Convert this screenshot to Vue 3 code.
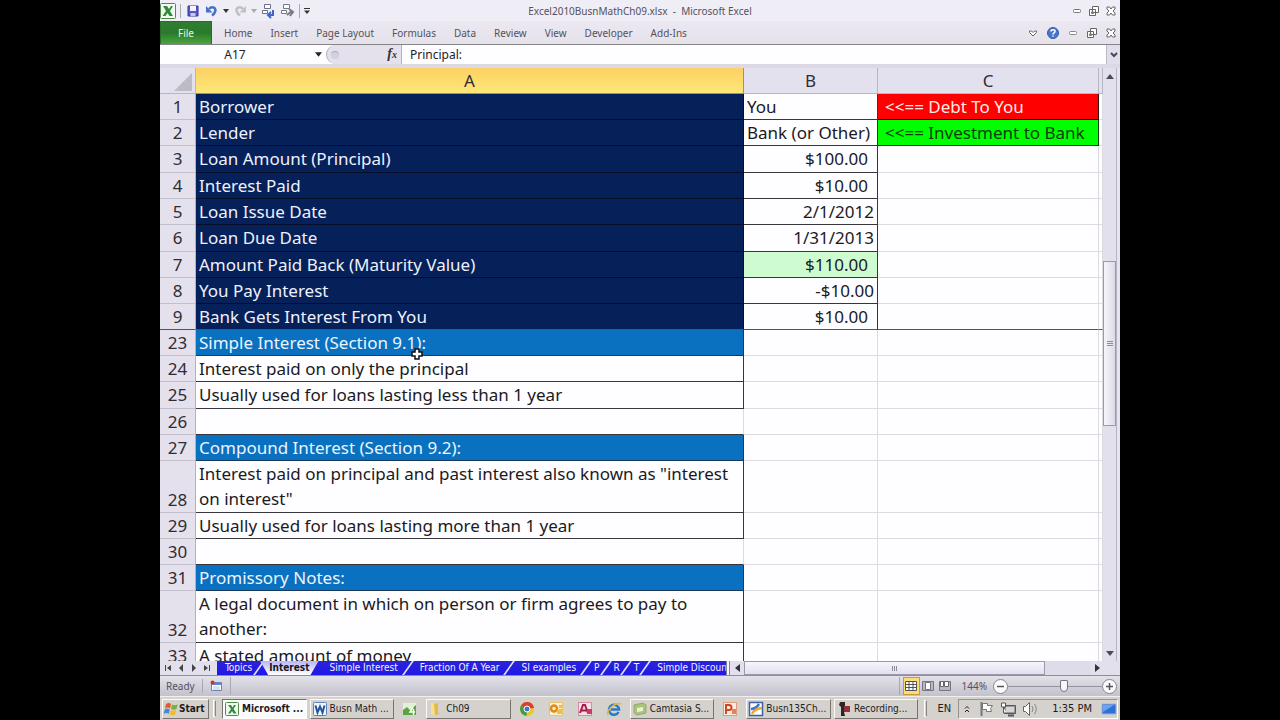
<script setup>
import { ref } from 'vue'

const ribbonTabs = ['Home', 'Insert', 'Page Layout', 'Formulas', 'Data', 'Review', 'View', 'Developer', 'Add-Ins']

const rows = [
  { n: 1, a: 'Borrower', kind: 'navy', b: 'You', c: '<<== Debt To You', cKind: 'red' },
  { n: 2, a: 'Lender', kind: 'navy', b: 'Bank (or Other)', c: '<<== Investment to Bank', cKind: 'green' },
  { n: 3, a: 'Loan Amount (Principal)', kind: 'navy', b: '$100.00', bKind: 'money', tall: true },
  { n: 4, a: 'Interest Paid', kind: 'navy', b: '$10.00', bKind: 'money' },
  { n: 5, a: 'Loan Issue Date', kind: 'navy', b: '2/1/2012', bKind: 'right' },
  { n: 6, a: 'Loan Due Date', kind: 'navy', b: '1/31/2013', bKind: 'right', tall: true },
  { n: 7, a: 'Amount Paid Back (Maturity Value)', kind: 'navy', b: '$110.00', bKind: 'money mint' },
  { n: 8, a: 'You Pay Interest', kind: 'navy', b: '-$10.00', bKind: 'right' },
  { n: 9, a: 'Bank Gets Interest From You', kind: 'navy', b: '$10.00', bKind: 'money', freeze: true },
  { n: 23, a: 'Simple Interest (Section 9.1):', kind: 'blue' },
  { n: 24, a: 'Interest paid on only the principal', kind: 'boxed' },
  { n: 25, a: 'Usually used for loans lasting less than 1 year', kind: 'boxed', tall: true },
  { n: 26, a: '', kind: 'blank' },
  { n: 27, a: 'Compound Interest (Section 9.2):', kind: 'blue' },
  { n: 28, a: 'Interest paid on principal and past interest also known as "interest on interest"', kind: 'boxed', double: true },
  { n: 29, a: 'Usually used for loans lasting more than 1 year', kind: 'boxed' },
  { n: 30, a: '', kind: 'blank' },
  { n: 31, a: 'Promissory Notes:', kind: 'blue' },
  { n: 32, a: 'A legal document in which on person or firm agrees to pay to another:', kind: 'boxed', double: true },
  { n: 33, a: 'A stated amount of money', kind: 'boxed' }
]

const sheets = [
  { name: 'Topics' },
  { name: 'Interest', active: true },
  { name: 'Simple Interest' },
  { name: 'Fraction Of A Year' },
  { name: 'SI examples' },
  { name: 'P', short: true },
  { name: 'R', short: true },
  { name: 'T', short: true },
  { name: 'Simple Discount' }
]

const tasks = [
  { id: 'excel', label: 'Microsoft ...', active: true },
  { id: 'word', label: 'Busn Math ...' },
  { id: 'capture' },
  { id: 'folder', label: 'Ch09' },
  { id: 'chrome' },
  { id: 'outlook' },
  { id: 'access' },
  { id: 'ie' },
  { id: 'camtasia', label: 'Camtasia S...' },
  { id: 'powerpoint' },
  { id: 'pdf', label: 'Busn135Ch...' },
  { id: 'recorder', label: 'Recording...' }
]

const cellName = ref('A17')
const formula = ref('Principal:')
const zoom = ref(144)
</script>

<template>
  <main class="desktop">
    <section class="excel">
      <header class="titlebar">
        <div class="quick">
          <svg class="ic" viewBox="0 0 16 16"><rect x=".5" y=".5" width="15" height="15" rx="1" fill="#f4fbf2" stroke="#4f8a4c" /><path d="M3 3h4l2 3 2-3h2l-3 5 3 5H9.500L7.500 10 5.500 13H2.500l3.500-5z" fill="#2f8b3a" /></svg>
          <i class="vsep"></i>
          <button aria-label="Save"><svg class="ic" viewBox="0 0 16 16"><path d="M3 3h10v10H3z" fill="#5a55c4" stroke="#37349a" /><path d="M5 3h6v5H5z" fill="#f1f2ff" /><path d="M5.500 10h5v3h-5z" fill="#c5c7e6" /></svg></button>
          <button aria-label="Undo"><svg class="ic" viewBox="0 0 16 16"><path d="M5 6c3-3.500 8-1 6 3-.6 1.500-1.500 2.500-3 3.500" fill="none" stroke="#4770c6" stroke-width="2.500" /><path d="M2 3v6.500h6.500z" fill="#4770c6" /></svg></button>
          <button class="drop" aria-label="Undo list"><svg viewBox="0 0 6 4"><path d="M0 0h6L3 4z" fill="#333" /></svg></button>
          <button aria-label="Redo"><svg class="ic" viewBox="0 0 16 16"><path d="M11 6c-3-3.500-8-1-6 3 .6 1.500 1.500 2.500 3 3.500" fill="none" stroke="#c0bfc8" stroke-width="2.500" /><path d="M14 3v6.500H7.500z" fill="#c0bfc8" /></svg></button>
          <button class="drop" aria-label="Redo list"><svg viewBox="0 0 6 4"><path d="M0 0h6L3 4z" fill="#aaa" /></svg></button>
          <button aria-label="Group"><svg class="ic" viewBox="0 0 16 16"><path d="M4.500 1.500h6v4h-6zM2.500 7.500h5v3h-5z" fill="#fff" stroke="#6a7086" /><path d="M13 7v5H8m3-3-3 3 3 3" fill="none" stroke="#3e68c4" stroke-width="2" /></svg></button>
          <button aria-label="Ungroup"><svg class="ic" viewBox="0 0 16 16"><path d="M4.500 1.500h6v4h-6zM2.500 7.500h5v3h-5z" fill="#fff" stroke="#777b88" /><path d="M8 12l5-4M10 6l4 3-3 4" fill="none" stroke="#777b88" stroke-width="2" /></svg></button>
          <i class="vsep"></i>
          <button class="drop" aria-label="Customize toolbar"><svg viewBox="0 0 6 6"><path d="M0 0h6v1H0zM0 2.500h6L3 6z" fill="#333" /></svg></button>
        </div>
        <h1>Excel2010BusnMathCh09.xlsx &nbsp;-&nbsp; Microsoft Excel</h1>
        <div class="winbtns">
          <button aria-label="Minimize"><svg viewBox="0 0 10 10"><rect x="1.500" y="3.500" width="7" height="3" rx="1" fill="#fff" stroke="#777" /></svg></button>
          <button aria-label="Restore"><svg viewBox="0 0 10 10"><path d="M3.500 .5h6v6h-6zM.5 3.500h6v6h-6z" fill="#fff" stroke="#666" /><path d="M2.500 6h2v1.500h-2z" fill="none" stroke="#777" /></svg></button>
          <button aria-label="Close"><svg viewBox="0 0 10 10"><path d="M1 1h2.500L5 3l1.500-2H9v2L7 5l2 2v2H6.500L5 7 3.500 9H1V7l2-2-2-2z" fill="#fff" stroke="#666" /></svg></button>
        </div>
      </header>

      <nav class="ribbon">
        <button class="file">File</button>
        <button v-for="t in ribbonTabs" :key="t" class="rtab">{{ t }}</button>
        <div class="winbtns">
          <button aria-label="Collapse ribbon"><svg viewBox="0 0 10 10"><path d="M1.500 3h2L5 4.500 6.500 3h2v1.500L5 8 1.500 4.500z" fill="#fff" stroke="#666" /></svg></button>
          <button class="help" aria-label="Help"><svg viewBox="0 0 12 12"><circle cx="6" cy="6" r="5.500" fill="#4775cf" stroke="#315ca8" /><path d="M4 4.500C4 2.300 8 2.300 8 4.500 8 6 6 5.800 6 7.500M6 8.500v1.300" fill="none" stroke="#fff" stroke-width="1.500" /></svg></button>
          <button aria-label="Minimize workbook"><svg viewBox="0 0 10 10"><rect x="1.500" y="3.500" width="7" height="3" rx="1" fill="#fff" stroke="#888" /></svg></button>
          <button aria-label="Restore workbook"><svg viewBox="0 0 10 10"><path d="M3.500 .5h6v6h-6zM.5 3.500h6v6h-6z" fill="#fff" stroke="#666" /><path d="M2.500 6h2v1.500h-2z" fill="none" stroke="#777" /></svg></button>
          <button aria-label="Close workbook"><svg viewBox="0 0 10 10"><path d="M1 1h2.500L5 3l1.500-2H9v2L7 5l2 2v2H6.500L5 7 3.500 9H1V7l2-2-2-2z" fill="#fff" stroke="#666" /></svg></button>
        </div>
      </nav>

      <div class="formulabar">
        <input v-model="cellName" class="namebox" aria-label="Name box" />
        <button class="namedrop" aria-label="Names"><svg viewBox="0 0 8 5"><path d="M0 0h8L4 5z" fill="#222" /></svg></button>
        <div class="fxarea"><i class="knob"></i><button class="fx" aria-label="Insert function"><i>f</i><small>x</small></button></div>
        <input v-model="formula" class="formula" aria-label="Formula" />
        <button class="expand" aria-label="Expand formula bar"><svg viewBox="0 0 8 6"><path d="M1 1l3 3 3-3" fill="none" stroke="#444a5e" stroke-width="2" /></svg></button>
      </div>

      <div class="work">
        <div class="sheet">
          <table>
            <colgroup><col class="c-n" /><col /><col class="c-b" /><col class="c-c" /><col class="c-d" /></colgroup>
            <thead>
              <tr>
                <th class="corner"><svg viewBox="0 0 18 18"><path d="M18 0v18H0z" fill="#bcbcc4" /></svg></th>
                <th class="sel">A</th><th>B</th><th>C</th><th></th>
              </tr>
            </thead>
            <tbody>
              <tr v-for="r in rows" :key="r.n" :class="{ tall: r.tall, double: r.double, freeze: r.freeze }">
                <th scope="row">{{ r.n }}</th>
                <td :class="r.kind">{{ r.a }}</td>
                <td :class="[r.b ? 'entry' : '', r.bKind]">{{ r.b }}</td>
                <td :class="r.cKind">{{ r.c }}</td>
                <td></td>
              </tr>
            </tbody>
          </table>
          <svg class="cursor" viewBox="0 0 12 12"><path d="M4 1h4v3h3v4H8v3H4V8H1V4h3z" fill="#fff" stroke="#111" stroke-width="1.500" /></svg>
        </div>
        <div class="vscroll">
          <button aria-label="Scroll up"><svg viewBox="0 0 8 5"><path d="M0 5h8L4 0z" fill="#4b4b58" /></svg></button>
          <div class="vtrack"><div class="vthumb"><i></i><i></i><i></i></div></div>
          <button aria-label="Scroll down"><svg viewBox="0 0 8 5"><path d="M0 0h8L4 5z" fill="#4b4b58" /></svg></button>
        </div>
      </div>

      <div class="sheetbar">
        <div class="navbtns">
          <button aria-label="First sheet"><svg viewBox="0 0 8 8"><path d="M1 1h1v6H1zM7 1v6L3 4z" fill="#444" /></svg></button>
          <button aria-label="Previous sheet"><svg viewBox="0 0 8 8"><path d="M6 0v8L2 4z" fill="#444" /></svg></button>
          <button aria-label="Next sheet"><svg viewBox="0 0 8 8"><path d="M2 0v8l4-4z" fill="#444" /></svg></button>
          <button aria-label="Last sheet"><svg viewBox="0 0 8 8"><path d="M6 1h1v6H6zM1 1v6l4-3z" fill="#444" /></svg></button>
        </div>
        <div class="tabs">
          <button v-for="s in sheets" :key="s.name" :class="{ on: s.active, short: s.short }">{{ s.name }}</button>
        </div>
        <i class="splitter"></i>
        <div class="hscroll">
          <button aria-label="Scroll left"><svg viewBox="0 0 5 8"><path d="M5 0v8L0 4z" fill="#333" /></svg></button>
          <div class="htrack"><div class="hthumb"><i></i><i></i><i></i></div></div>
          <button aria-label="Scroll right"><svg viewBox="0 0 5 8"><path d="M0 0v8l5-4z" fill="#333" /></svg></button>
        </div>
      </div>

      <footer class="status">
        <span class="ready">Ready</span>
        <button class="macro" aria-label="Record macro"><svg viewBox="0 0 12 12"><path d="M1.500 2.500h10v8h-10z" fill="#fff" stroke="#6b83b5" /><path d="M2 3h9v2H2z" fill="#5d86cf" /><path d="M3 7h7M3 9h7" stroke="#b9c4da" /><circle cx="2.500" cy="2.500" r="2" fill="#c8392d" /></svg></button>
        <div class="views">
          <button class="on" aria-label="Normal view"><svg viewBox="0 0 12 10"><path d="M.5 .5h11v9H.5zM.5 3.500h11M.5 6.500h11M4 .5v9M8 .5v9" fill="#fff" stroke="#55525a" /></svg></button>
          <button aria-label="Page layout view"><svg viewBox="0 0 12 10"><path d="M.5 .5h11v9H.5z" fill="#b8b8c0" stroke="#77757e" /><path d="M3.500 1.500h5v7h-5z" fill="#fff" stroke="#77757e" /></svg></button>
          <button aria-label="Page break view"><svg viewBox="0 0 12 10"><path d="M.5 .5h11v9H.5z" fill="#b8b8c0" stroke="#77757e" /><path d="M1.500 .5h3v5h-3zM5.500 .5h4v5h-4z" fill="#fff" stroke="#66646c" /></svg></button>
        </div>
        <label class="pct" for="zoom">{{ zoom }}%</label>
        <button class="round" aria-label="Zoom out"><svg viewBox="0 0 15 15"><circle cx="7.500" cy="7.500" r="7" fill="#fbfbfd" stroke="#85848e" /><path d="M4 7.500h7" stroke="#555" stroke-width="1.500" /></svg></button>
        <input id="zoom" v-model="zoom" class="zoom" type="range" min="10" max="230" />
        <button class="round" aria-label="Zoom in"><svg viewBox="0 0 15 15"><circle cx="7.500" cy="7.500" r="7" fill="#fbfbfd" stroke="#85848e" /><path d="M4 7.500h7M7.500 4v7" stroke="#555" stroke-width="1.500" /></svg></button>
      </footer>
    </section>

    <section class="taskbar">
      <button class="start">
        <svg class="ic" viewBox="0 0 16 16"><path d="M3 3q3-2 5 0L7 7.500q-2-2-5 0z" fill="#e2592f" /><path d="M9 3.500q2 1.500 5.500 0L13.500 8q-3 1.500-5.500 0z" fill="#76b043" /><path d="M1.700 8.500q3-2 5 0L5.700 13q-2-2-5 0z" fill="#4a86d8" /><path d="M7.700 9q2 1.500 5.500 0l-1 4.500q-3 1.500-5.500 0z" fill="#f2b92d" /></svg>Start
      </button>
      <i class="grip"></i>
      <div class="tasks">
        <button v-for="t in tasks" :key="t.id" :class="[t.label ? 'task' : 'quickicon', { on: t.active }]" :aria-label="t.label || t.id">
          <svg class="ic" viewBox="0 0 16 16">
            <template v-if="t.id === 'excel'"><rect x="1.500" y="1.500" width="13" height="13" rx="1" fill="#f2faf0" stroke="#4f8a4c" /><path d="M4 4h3l1.500 2.500L10 4h2L9.500 8l3 4.500h-3L8 10l-1.500 2.500H4L7 8z" fill="#2f8b3a" /></template>
            <template v-else-if="t.id === 'word'"><rect x="1.500" y="1.500" width="13" height="13" rx="1" fill="#eef5fd" stroke="#5b84bb" /><path d="M3.500 4.500l2 7 2.500-6 2.500 6 2-7" fill="none" stroke="#23539c" stroke-width="2" /></template>
            <template v-else-if="t.id === 'capture'"><path d="M1 2h13v12H1z" fill="#e3f0d8" /><path d="M1 14V9l4-3 3 3 6-5v10z" fill="#5ba53d" /><path d="M11 6L8 11h5M11.500 8v6" fill="none" stroke="#fff" stroke-width="1.500" /></template>
            <template v-else-if="t.id === 'folder'"><path d="M3 2l5 1v11l-5-1z" fill="#f7df8c" /><path d="M6 3l4-1v10l2 1-5 1z" fill="#e4b94a" /></template>
            <template v-else-if="t.id === 'chrome'"><circle cx="8" cy="8" r="7" fill="#e9c62c" /><path d="M8 8L2 4.500A7 7 0 0 1 15 7z" fill="#d8402f" /><path d="M8 8L2 4.500A7 7 0 0 0 7.500 15z" fill="#3f9d4a" /><circle cx="8" cy="8" r="3" fill="#3f78c9" stroke="#fff" /></template>
            <template v-else-if="t.id === 'outlook'"><rect x="1.500" y="1.500" width="13" height="13" fill="#fdf1c8" stroke="#e8c374" /><circle cx="6" cy="7.500" r="3" fill="none" stroke="#df8b1c" stroke-width="2.500" /><path d="M9 8h5v5H9zM11 4h3v3h-3z" fill="#efbd4d" /></template>
            <template v-else-if="t.id === 'access'"><rect x="1.500" y="1.500" width="13" height="13" fill="#f9dfe6" stroke="#d98aa4" /><path d="M3 12L6 4h2l3 8M4.500 9.500h5" fill="none" stroke="#a61c4b" stroke-width="2" /><path d="M10 8h5v5h-5z" fill="#c93a69" /></template>
            <template v-else-if="t.id === 'ie'"><path d="M12.500 11A5 5 0 1 1 13 8.500H5" fill="none" stroke="#2e78c8" stroke-width="2.500" /><path d="M2 14C-1 11 9 0 15 3" fill="none" stroke="#e3b83c" stroke-width="1.500" /></template>
            <template v-else-if="t.id === 'camtasia'"><path d="M2 4l9-2 3 2v8l-9 2-3-2z" fill="#a9c47a" stroke="#8fac68" /><path d="M5 7l6-1v4l-6 1z" fill="#e9f1d4" /></template>
            <template v-else-if="t.id === 'powerpoint'"><rect x="1.500" y="1.500" width="13" height="13" fill="#fdeae0" stroke="#e39a7a" /><path d="M4 13V4h3q2.500 0 2.500 2.500T7 9H4" fill="none" stroke="#cb4a1f" stroke-width="2" /><path d="M10 8h4v5h-4z" fill="#e58256" /></template>
            <template v-else-if="t.id === 'pdf'"><rect x="1.500" y="1.500" width="13" height="13" fill="#fff" stroke="#3b62a8" stroke-width="1.500" /><path d="M3 8q5 0 8-5" fill="none" stroke="#3b74cf" stroke-width="2.500" /><path d="M4 13q2-5 10-6" fill="none" stroke="#eda52d" stroke-width="2.500" /></template>
            <template v-else><path d="M4 1h5v5H8v5l1 4H5V6L3 4z" fill="#2b2629" /><path d="M8 5h6v6H8z" fill="#962f3c" /></template>
          </svg>
          <span v-if="t.label">{{ t.label }}</span>
        </button>
      </div>
      <i class="grip right"></i>
      <span class="lang">EN</span>
      <div class="tray">
        <svg class="chev" viewBox="0 0 6 8"><path d="M1 3.500l2-2 2 2M1 7l2-2 2 2" fill="none" stroke="#222" /></svg>
        <svg class="ic" viewBox="0 0 16 16"><path d="M3.500 1v14" stroke="#777" stroke-width="2" /><path d="M4.500 2.500h5v2h5l-2 3 1 3h-5v-2h-4z" fill="#fff" stroke="#777" /></svg>
        <svg class="ic" viewBox="0 0 16 16"><path d="M4.500 4.500h11v8h-11z" fill="#9c9ca0" stroke="#555" /><path d="M6 6h8v5H6z" fill="#d6d6da" /><path d="M8 14.500h6" stroke="#555" stroke-width="2" /><path d="M1.500 2h4v4h-4zM3.500 6v6h3" fill="#fff" stroke="#555" /></svg>
        <svg class="ic" viewBox="0 0 16 16"><path d="M1.500 5.500h2l4-4v13l-4-4h-2z" fill="#fff" stroke="#666" /><path d="M10 5q2 3 0 6M12.500 3q3.500 5 0 10" fill="none" stroke="#888" /></svg>
        <time>1:35 PM</time>
        <svg class="ic" viewBox="0 0 16 16"><path d="M1 3h14v10H1z" fill="#2f6fd6" stroke="#9db6dc" /><path d="M2 4h11L2 11z" fill="#6ca4f0" /></svg>
      </div>
    </section>
  </main>
</template>

<style>
html, body { margin: 0; background: #000; }
</style>

<style scoped>
* { box-sizing: border-box; }
.desktop { height: 100vh; margin: 0 12.5%; display: flex; flex-direction: column; overflow: hidden; font: 11px/14px "Noto Sans", sans-serif; color: #55525c; background: #e6e3ee; }
button { padding: 0; margin: 0; border: 0; background: none; font: inherit; color: inherit; display: flex; align-items: center; justify-content: center; flex: none; }
input { border: 0; margin: 0; padding: 0; font: inherit; border-radius: 0; outline: 0; min-width: 0; }
svg { display: block; flex: none; }
.ic { width: 16px; height: 16px; }
.excel { flex: 1; min-height: 0; display: flex; flex-direction: column; }

.titlebar { height: 21px; flex: none; display: grid; grid-template-columns: 1fr auto 1fr; align-items: center; background: #efedf6; }
.titlebar h1 { margin: 0; font: 10px/14px "Noto Sans", sans-serif; }
.quick { display: flex; align-items: center; gap: 3px; }
.quick .vsep { margin: 0 1px; width: 1px; height: 14px; background: #aaa8b2; }
.drop svg { width: 6px; height: 6px; }
.winbtns { margin-left: auto; display: flex; align-items: center; gap: 7px; padding-right: 4px; }
.winbtns svg { width: 10px; height: 10px; }
.winbtns .help svg { width: 12px; height: 12px; }

.ribbon { height: 24px; flex: none; display: flex; align-items: stretch; background: linear-gradient(#ebe8f2, #e5e2ea); border-bottom: 1px solid #85858a; font-size: 10px; }
.ribbon .winbtns { gap: 9px; }
.file { width: 52px; margin-right: 3px; color: #e8f6e4; background: linear-gradient(#2f7d32, #2a7a2c 50%, #4ba53c); border: 1px solid #2b6b2c; border-bottom: 0; }
.rtab { padding: 0 9px; }

.formulabar { height: 23px; flex: none; display: flex; background: #fefdff; border-bottom: 4px solid #dcd9e4; color: #222; font-size: 12px; }
.namebox { width: 150px; text-align: center; background: transparent; color: #222; }
.namedrop { width: 16px; }
.namedrop svg { width: 7px; height: 5px; }
.fxarea { width: 76px; flex: none; display: flex; justify-content: space-between; align-items: center; padding: 0 4px; border: 1px solid #b2b0bc; border-width: 0 1px 0 1px; border-radius: 10px 0 0 10px; background: #e4e1ec; }
.knob { width: 8px; height: 8px; border-radius: 50%; background: #d2d0dc; border-top: 1px solid #a9a7b4; }
.fx { font: bold 14px/18px "Liberation Serif", serif; color: #333; align-items: baseline; }
.fx small { font: italic bold 10px/18px "Liberation Serif", serif; }
.formula { flex: 1; padding-left: 8px; background: transparent; color: #222; }
.expand { width: 14px; background: #e0deea; border-left: 1px solid #bbb9c6; }
.expand svg { width: 8px; height: 6px; }

.work { flex: 1; min-height: 0; display: flex; padding-right: 3px; }
.sheet { position: relative; flex: 1; min-width: 0; overflow: hidden; background: #fefdff; }
table { width: 100%; table-layout: fixed; border-collapse: separate; border-spacing: 0; font: 17px/26px "Noto Sans", sans-serif; color: #1a1a1e; }
.c-n { width: 36px; }
.c-b { width: 134px; }
.c-c { width: 221px; }
.c-d { width: 4px; }
th { padding: 0; font-weight: 400; color: #2e2d33; background: #e4e1ec; border-right: 1px solid #b3b1bd; border-bottom: 1px solid #c2c0cc; line-height: 25px; vertical-align: bottom; }
thead th { height: 26px; line-height: 25px; background: #e4e1ee; border-color: #b8b6c2; }
thead th.sel { background: linear-gradient(#fcd064, #fee878); border-color: #b98e3f; }
.corner svg { width: 18px; height: 18px; margin: 0 3px 2px auto; }
td { height: 26px; padding: 0 3px; line-height: 25px; vertical-align: bottom; border-right: 1px solid #dcdbe2; border-bottom: 1px solid #dcdbe2; white-space: nowrap; overflow: hidden; }
.tall td { height: 27px; line-height: 26px; }
.tall th { line-height: 26px; }
.double td { height: 52px; line-height: 26px; white-space: normal; vertical-align: top; padding-bottom: 0; }
.double td { line-height: 25px; }
td.navy { color: #eef1fb; background: #06205a; border-color: #050d29; }
td.blue { color: #eaf5fd; background: #0a70c0; border-color: #16395c; }
td.boxed { border-color: #37363c; }
td.blank { border-bottom-color: #37363c; }
td.entry { border-color: #37363c; }
td.right, td.money { text-align: right; }
td.money { padding-right: 9px; }
td.mint { background: #cffbd0; }
td.red { padding-left: 7px; color: #ffe9e9; background: #f00; border-color: #32100f; }
td.green { padding-left: 7px; color: #0b3d0b; background: #0f0; border-color: #0b3d0b; }
.freeze td, .freeze th { border-bottom-color: #55545a; }
.cursor { position: absolute; left: 251px; top: 280px; width: 12px; height: 12px; }

.vscroll { width: 14px; flex: none; display: flex; flex-direction: column; background: #e3e0ed; border-right: 1px solid #b6b4c2; }
.vscroll button { height: 16px; }
.vscroll button svg { width: 8px; height: 5px; }
.vtrack { flex: 1; padding-top: 177px; }
.vthumb { height: 165px; display: flex; flex-direction: column; align-items: center; justify-content: center; gap: 1px; background: linear-gradient(90deg, #f6f5fb, #dddbe9); border: 1px solid #9c9aa8; }
.vthumb i { width: 6px; height: 1px; background: #8d8b98; }

.sheetbar { height: 15px; flex: none; display: flex; padding-right: 16px; background: #e3e0ed; font: 10px/14px "DejaVu Sans Condensed", "DejaVu Sans", sans-serif; border-bottom: 1px solid #8f8e98; }
.navbtns { width: 57px; flex: none; display: flex; align-items: center; gap: 5px; padding-left: 4px; }
.navbtns svg { width: 8px; height: 8px; }
.tabs { flex: 0 1 509px; min-width: 0; display: flex; overflow: hidden; background: linear-gradient(#2a24d8, #2018e8); color: #f3f2ff; }
.tabs button { position: relative; padding: 0 11px; white-space: nowrap; }
.tabs button:first-child { padding: 0 8px; }
.tabs .short { padding: 0 7px; }
.tabs button::after { content: ""; position: absolute; right: 0; top: 0; width: 2px; height: 14px; background: #e4e2fa; transform: skewX(-35deg); }
.tabs .on { padding: 0 9px; font-weight: 700; color: #16151c; background: linear-gradient(#b9b6f5, #fff); clip-path: polygon(0 0, 100% 0, calc(100% - 8px) 100%, 8px 100%); }
.splitter { width: 4px; flex: none; background: #f4f3f8; border: 1px solid #85838f; border-width: 0 1px; }
.hscroll { flex: 1; display: flex; }
.hscroll button { width: 14px; }
.hscroll button svg { width: 5px; height: 8px; }
.htrack { flex: 1; background: #dfdcea; }
.hthumb { width: 87%; height: 14px; display: flex; align-items: center; justify-content: center; gap: 1px; background: linear-gradient(#f6f5fc, #e2e0ef); border: 1px solid #9c9aa8; }
.hthumb i { width: 1px; height: 5px; background: #8d8b98; }

.status { height: 20px; flex: none; display: flex; align-items: center; padding: 0 3px 0 6px; background: linear-gradient(#e3e1e9, #c3c1cb); }
.ready { padding-right: 7px; border-right: 1px solid #aaa8b3; font-size: 10px; }
.macro { width: 28px; height: 18px; border-right: 1px solid #aaa8b3; }
.macro svg { width: 12px; height: 12px; }
.views { margin-left: auto; display: flex; border-left: 1px solid #aaa8b3; padding-left: 3px; }
.views button { width: 17px; height: 18px; border: 1px solid transparent; }
.views .on { background: #fbdc79; border-color: #c59b3b; }
.views svg { width: 12px; height: 10px; }
.pct { margin: 0 6px 0 8px; font-size: 10px; }
.round svg { width: 15px; height: 15px; }
.zoom { width: 94px; height: 16px; appearance: none; background: linear-gradient(#94929e, #94929e) center / 100% 1px no-repeat; }
.zoom::-webkit-slider-thumb { appearance: none; width: 8px; height: 12px; background: #f7f6fa; border: 1px solid #77757f; border-radius: 1px 1px 4px 4px; }

.taskbar { height: 24px; flex: none; display: flex; align-items: center; padding: 0 2px 0 2px; background: #d5d1cd; border-top: 1px solid #f1efee; color: #1c1b1e; font: 10px/14px "DejaVu Sans Condensed", "DejaVu Sans", sans-serif; }
.start, .task { height: 20px; border: 1px solid; border-color: #fbfaf9 #77736f #77736f #fbfaf9; }
.start { width: 47px; font-weight: 700; justify-content: flex-start; }
.grip { width: 3px; height: 17px; margin: 0 6px 0 4px; border: 1px solid #fff; border-right-color: #8b8783; flex: none; }
.grip.right { margin: 0 10px 0 6px; }
.tasks { flex: 1; min-width: 0; display: flex; align-items: center; gap: 3px; }
.task { flex: 0 1 86px; min-width: 0; justify-content: flex-start; gap: 2px; padding: 0 1px; white-space: nowrap; overflow: hidden; }
.task.on { font-weight: 700; background: #fcfbfb; border-color: #77736f #fff #fff #77736f; }
.quickicon { width: 26px; }
.lang { font-size: 11px; padding-right: 7px; }
.tray { height: 20px; display: flex; align-items: center; gap: 6px; padding-left: 5px; border: 1px solid; border-color: #96928e #fff #fff #96928e; }
.chev { width: 6px; height: 8px; margin-right: 2px; }
.tray time { margin: 0 3px 0 8px; font-size: 11px; white-space: nowrap; }
</style>
